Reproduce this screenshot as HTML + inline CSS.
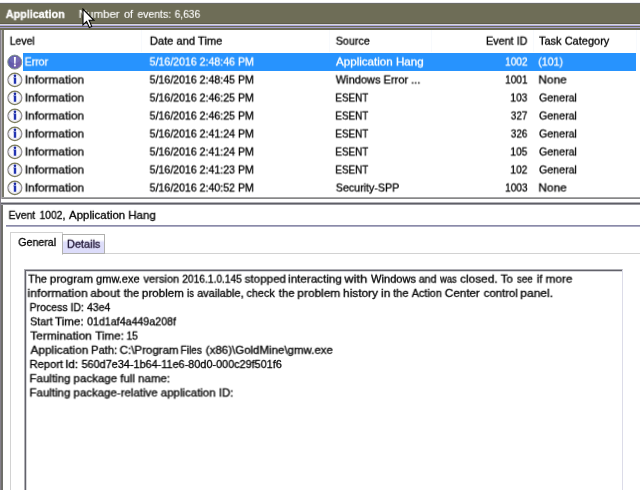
<!DOCTYPE html>
<html>
<head>
<meta charset="utf-8">
<title>Event Viewer</title>
<style>
html,body{margin:0;padding:0;}
html{width:640px;height:490px;overflow:hidden;}
body{width:640px;height:490px;overflow:hidden;background:#fff;position:relative;
 font-family:"Liberation Sans",sans-serif;font-size:11px;color:#000;}
.a{position:absolute;}
.t{position:absolute;left:0;top:0;white-space:pre;line-height:14px;height:14px;transform-origin:0 0;-webkit-text-stroke:0.3px;will-change:transform;}
.w{color:#fff;}
.L{font-size:11.5px;}
.n{-webkit-text-stroke:0.12px;}
#hdr{left:0;top:3px;width:640px;height:21px;background:#6e6d57;border-top:1px solid #6b6b66;box-sizing:border-box;}
#h0{left:0;top:24px;width:640px;height:1px;background:#d6d6da;}
#hm{left:0;top:23px;width:640px;height:1px;background:#5e5d4a;}
#ht{left:0;top:2px;width:640px;height:1px;background:#ebebf1;}
#h1{left:0;top:25px;width:640px;height:1px;background:#b2acde;}
#h2{left:0;top:26px;width:640px;height:1px;background:#6c6b58;}
#h3{left:0;top:27px;width:640px;height:1px;background:#a4a0cc;}
#h4{left:0;top:28px;width:640px;height:2px;background:#6e6d58;}
/* left edge, list section */
#le0{left:0;top:30px;width:1px;height:460px;background:#85808a;}
#le1{left:1px;top:30px;width:1px;height:169px;background:#b2aeb2;}
#le2{left:2px;top:30px;width:2px;height:169px;background:#78786a;}
/* left edge, detail section */
#le3{left:1px;top:203px;width:2px;height:287px;background:#6e6e6a;}
#sel{left:23px;top:53px;width:613px;height:18px;background:#2793fe;}
#lb{left:2px;top:197px;width:638px;height:2px;background:linear-gradient(#b6b6b6,#78787a);}
#sp{left:1px;top:202px;width:639px;height:3px;background:linear-gradient(#dcdce0,#5e5e66 50%,#b8b8be);}
#pl{left:6px;top:225px;width:634px;height:1px;background:#8a8aa8;}
#pl2{left:6px;top:226px;width:634px;height:1px;background:#acacc4;}
#tp{left:10px;top:253px;width:630px;height:237px;border:1px solid #d2d2d2;border-right:none;border-bottom:none;box-sizing:border-box;}
#tg{left:10px;top:232px;width:53px;height:23px;border:1px solid #d2d2d2;border-bottom:none;background:#fff;box-sizing:border-box;}
#td{left:62px;top:234px;width:43px;height:20px;border:1px solid #b0b0ae;background:linear-gradient(#fff 0%,#fff 26%,#dedefa 42%,#dcdcfa 100%);box-sizing:border-box;}
#tb{left:24px;top:269px;width:599px;height:221px;border:1px solid #b0b0b6;border-bottom:none;border-right-color:#dcdce8;box-sizing:border-box;}
#tb2{left:25px;top:270px;width:597px;height:220px;border:1px solid #62626a;border-right:none;border-bottom:none;box-sizing:border-box;}
#tb3{left:26px;top:271px;width:596px;height:219px;border:1px solid #d6d6da;border-right:none;border-bottom:none;box-sizing:border-box;}
.cs{position:absolute;top:30px;width:1px;height:22px;background:#f8fafd;}
.ic{position:absolute;left:7px;width:16px;height:16px;}
</style>
</head>
<body>
<div class="a" id="hdr"></div>
<div class="a" id="ht"></div><div class="a" id="hm"></div><div class="a" id="h0"></div><div class="a" id="h1"></div><div class="a" id="h2"></div><div class="a" id="h3"></div><div class="a" id="h4"></div>
<div class="a" id="le0"></div><div class="a" id="le1"></div><div class="a" id="le2"></div><div class="a" id="le3"></div>
<div class="cs" style="left:141px"></div><div class="cs" style="left:329px"></div><div class="cs" style="left:431px"></div><div class="cs" style="left:533px"></div><div class="cs" style="left:636px"></div>
<span class="t w" id="t_app" style="transform:matrix(0.9831,0.0002,0,1,5.75,6.90);font-weight:bold;">Application</span>
<span class="t w n" id="t_numw0" style="transform:matrix(1.0447,0.0002,0,1,78.76,6.90);">Number</span>
<span class="t w n" id="t_numw1" style="transform:matrix(0.9943,0.0002,0,1,124.00,6.90);">of</span>
<span class="t w n" id="t_numw2" style="transform:matrix(0.9441,0.0002,0,1,137.53,6.90);">events:</span>
<span class="t w n" id="t_numw3" style="transform:matrix(0.9208,0.0002,0,1,174.74,6.90);">6,636</span>

<span class="t" id="c1" style="transform:matrix(0.9469,0.0002,0,1,9.80,33.70);">Level</span>
<span class="t" id="c2" style="transform:matrix(1.0121,0.0002,0,1,149.89,33.70);">Date and Time</span>
<span class="t" id="c3" style="transform:matrix(0.9779,0.0002,0,1,335.76,33.70);">Source</span>
<span class="t" id="c4" style="transform:matrix(0.9816,0.0002,0,1,486.02,33.70);">Event ID</span>
<span class="t" id="c5" style="transform:matrix(1.0000,0.0002,0,1,539.00,33.70);">Task Category</span>

<div class="a" id="sel"></div>
<div class="a" id="lb"></div>
<div class="a" id="sp"></div>
<div class="a" id="pl"></div><div class="a" id="pl2"></div>
<svg width="0" height="0" style="position:absolute"><defs><linearGradient id="ig" x1="0" y1="0" x2="0" y2="1"><stop offset="0" stop-color="#7e7e5c"/><stop offset="0.5" stop-color="#9c98a4"/><stop offset="1" stop-color="#7e7e5c"/></linearGradient></defs></svg>
<svg class="ic" style="top:53.7px" viewBox="0 0 16 16"><defs><linearGradient id="eg" x1="0" y1="0" x2="1" y2="0.3"><stop offset="0" stop-color="#5558ae"/><stop offset="1" stop-color="#7660a8"/></linearGradient></defs>
<ellipse cx="7.75" cy="8.1" rx="7.0" ry="7.0" fill="url(#eg)" stroke="#84968e" stroke-width="1"/>
<ellipse cx="7.8" cy="5.9" rx="5" ry="3.4" fill="#8a88cc" opacity="0.35"/>
<path d="M6.9 3.1h2l-0.35 6.6h-1.3z" fill="#fff"/>
<rect x="6.9" y="10.6" width="2" height="1.9" rx="0.7" fill="#fff"/></svg>
<span class="t w L" id="r0a" style="transform:matrix(0.9143,0.0002,0,1,24.69,54.50);">Error</span>
<span class="t w L" id="r0b" style="transform:matrix(0.9208,0.0002,0,1,149.64,54.50);">5/16/2016 2:48:46 PM</span>
<span class="t w L" id="r0c" style="transform:matrix(1.0087,0.0002,0,1,336.00,54.50);">Application Hang</span>
<span class="t w L" id="r0d" style="transform:matrix(0.8750,0.0002,0,1,505.12,54.50);">1002</span>
<span class="t w L" id="r0e" style="transform:matrix(0.9216,0.0002,0,1,538.31,54.50);">(101)</span>
<svg class="ic" style="top:71.7px" viewBox="0 0 16 16">
<ellipse cx="7.85" cy="7.85" rx="6.95" ry="6.6" fill="#fcfcfe" stroke="url(#ig)" stroke-width="1.4"/>
<ellipse cx="7.85" cy="7.85" rx="5.6" ry="5.3" fill="none" stroke="#e6e4ee" stroke-width="1"/>
<circle cx="7.95" cy="3.85" r="1.3" fill="#1c2ca4"/>
<path d="M6.3 5.4h2.9v6.4H6.8V6.3H6.3z" fill="#2234b2"/></svg>
<span class="t L" id="r1a" style="transform:matrix(1.0314,0.0002,0,1,24.72,72.50);">Information</span>
<span class="t L" id="r1b" style="transform:matrix(0.9208,0.0002,0,1,149.64,72.50);">5/16/2016 2:48:45 PM</span>
<span class="t L" id="r1c" style="transform:matrix(0.9598,0.0002,0,1,335.76,72.50);">Windows Error ...</span>
<span class="t L" id="r1d" style="transform:matrix(0.8750,0.0002,0,1,505.12,72.50);">1001</span>
<span class="t L" id="r1e" style="transform:matrix(1.0288,0.0002,0,1,538.47,72.50);">None</span>
<svg class="ic" style="top:89.7px" viewBox="0 0 16 16">
<ellipse cx="7.85" cy="7.85" rx="6.95" ry="6.6" fill="#fcfcfe" stroke="url(#ig)" stroke-width="1.4"/>
<ellipse cx="7.85" cy="7.85" rx="5.6" ry="5.3" fill="none" stroke="#e6e4ee" stroke-width="1"/>
<circle cx="7.95" cy="3.85" r="1.3" fill="#1c2ca4"/>
<path d="M6.3 5.4h2.9v6.4H6.8V6.3H6.3z" fill="#2234b2"/></svg>
<span class="t L" id="r2a" style="transform:matrix(1.0314,0.0002,0,1,24.72,90.50);">Information</span>
<span class="t L" id="r2b" style="transform:matrix(0.9208,0.0002,0,1,149.64,90.50);">5/16/2016 2:46:25 PM</span>
<span class="t L" id="r2c" style="transform:matrix(0.8600,0.0002,0,1,335.39,90.50);">ESENT</span>
<span class="t L" id="r2d" style="transform:matrix(0.8873,0.0002,0,1,510.36,90.50);">103</span>
<span class="t L" id="r2e" style="transform:matrix(0.9245,0.0002,0,1,539.04,90.50);">General</span>
<svg class="ic" style="top:107.7px" viewBox="0 0 16 16">
<ellipse cx="7.85" cy="7.85" rx="6.95" ry="6.6" fill="#fcfcfe" stroke="url(#ig)" stroke-width="1.4"/>
<ellipse cx="7.85" cy="7.85" rx="5.6" ry="5.3" fill="none" stroke="#e6e4ee" stroke-width="1"/>
<circle cx="7.95" cy="3.85" r="1.3" fill="#1c2ca4"/>
<path d="M6.3 5.4h2.9v6.4H6.8V6.3H6.3z" fill="#2234b2"/></svg>
<span class="t L" id="r3a" style="transform:matrix(1.0314,0.0002,0,1,24.72,108.50);">Information</span>
<span class="t L" id="r3b" style="transform:matrix(0.9208,0.0002,0,1,149.64,108.50);">5/16/2016 2:46:25 PM</span>
<span class="t L" id="r3c" style="transform:matrix(0.8600,0.0002,0,1,335.39,108.50);">ESENT</span>
<span class="t L" id="r3d" style="transform:matrix(0.8630,0.0002,0,1,510.82,108.50);">327</span>
<span class="t L" id="r3e" style="transform:matrix(0.9245,0.0002,0,1,539.04,108.50);">General</span>
<svg class="ic" style="top:125.7px" viewBox="0 0 16 16">
<ellipse cx="7.85" cy="7.85" rx="6.95" ry="6.6" fill="#fcfcfe" stroke="url(#ig)" stroke-width="1.4"/>
<ellipse cx="7.85" cy="7.85" rx="5.6" ry="5.3" fill="none" stroke="#e6e4ee" stroke-width="1"/>
<circle cx="7.95" cy="3.85" r="1.3" fill="#1c2ca4"/>
<path d="M6.3 5.4h2.9v6.4H6.8V6.3H6.3z" fill="#2234b2"/></svg>
<span class="t L" id="r4a" style="transform:matrix(1.0314,0.0002,0,1,24.72,126.50);">Information</span>
<span class="t L" id="r4b" style="transform:matrix(0.9208,0.0002,0,1,149.64,126.50);">5/16/2016 2:41:24 PM</span>
<span class="t L" id="r4c" style="transform:matrix(0.8600,0.0002,0,1,335.39,126.50);">ESENT</span>
<span class="t L" id="r4d" style="transform:matrix(0.8630,0.0002,0,1,510.82,126.50);">326</span>
<span class="t L" id="r4e" style="transform:matrix(0.9245,0.0002,0,1,539.04,126.50);">General</span>
<svg class="ic" style="top:143.7px" viewBox="0 0 16 16">
<ellipse cx="7.85" cy="7.85" rx="6.95" ry="6.6" fill="#fcfcfe" stroke="url(#ig)" stroke-width="1.4"/>
<ellipse cx="7.85" cy="7.85" rx="5.6" ry="5.3" fill="none" stroke="#e6e4ee" stroke-width="1"/>
<circle cx="7.95" cy="3.85" r="1.3" fill="#1c2ca4"/>
<path d="M6.3 5.4h2.9v6.4H6.8V6.3H6.3z" fill="#2234b2"/></svg>
<span class="t L" id="r5a" style="transform:matrix(1.0314,0.0002,0,1,24.72,144.50);">Information</span>
<span class="t L" id="r5b" style="transform:matrix(0.9208,0.0002,0,1,149.64,144.50);">5/16/2016 2:41:24 PM</span>
<span class="t L" id="r5c" style="transform:matrix(0.8600,0.0002,0,1,335.39,144.50);">ESENT</span>
<span class="t L" id="r5d" style="transform:matrix(0.8873,0.0002,0,1,510.36,144.50);">105</span>
<span class="t L" id="r5e" style="transform:matrix(0.9245,0.0002,0,1,539.04,144.50);">General</span>
<svg class="ic" style="top:161.7px" viewBox="0 0 16 16">
<ellipse cx="7.85" cy="7.85" rx="6.95" ry="6.6" fill="#fcfcfe" stroke="url(#ig)" stroke-width="1.4"/>
<ellipse cx="7.85" cy="7.85" rx="5.6" ry="5.3" fill="none" stroke="#e6e4ee" stroke-width="1"/>
<circle cx="7.95" cy="3.85" r="1.3" fill="#1c2ca4"/>
<path d="M6.3 5.4h2.9v6.4H6.8V6.3H6.3z" fill="#2234b2"/></svg>
<span class="t L" id="r6a" style="transform:matrix(1.0314,0.0002,0,1,24.72,162.50);">Information</span>
<span class="t L" id="r6b" style="transform:matrix(0.9208,0.0002,0,1,149.64,162.50);">5/16/2016 2:41:23 PM</span>
<span class="t L" id="r6c" style="transform:matrix(0.8600,0.0002,0,1,335.39,162.50);">ESENT</span>
<span class="t L" id="r6d" style="transform:matrix(0.8873,0.0002,0,1,510.36,162.50);">102</span>
<span class="t L" id="r6e" style="transform:matrix(0.9245,0.0002,0,1,539.04,162.50);">General</span>
<svg class="ic" style="top:179.7px" viewBox="0 0 16 16">
<ellipse cx="7.85" cy="7.85" rx="6.95" ry="6.6" fill="#fcfcfe" stroke="url(#ig)" stroke-width="1.4"/>
<ellipse cx="7.85" cy="7.85" rx="5.6" ry="5.3" fill="none" stroke="#e6e4ee" stroke-width="1"/>
<circle cx="7.95" cy="3.85" r="1.3" fill="#1c2ca4"/>
<path d="M6.3 5.4h2.9v6.4H6.8V6.3H6.3z" fill="#2234b2"/></svg>
<span class="t L" id="r7a" style="transform:matrix(1.0314,0.0002,0,1,24.72,180.50);">Information</span>
<span class="t L" id="r7b" style="transform:matrix(0.9208,0.0002,0,1,149.64,180.50);">5/16/2016 2:40:52 PM</span>
<span class="t L" id="r7c" style="transform:matrix(0.9294,0.0002,0,1,335.79,180.50);">Security-SPP</span>
<span class="t L" id="r7d" style="transform:matrix(0.8750,0.0002,0,1,505.12,180.50);">1003</span>
<span class="t L" id="r7e" style="transform:matrix(1.0288,0.0002,0,1,538.47,180.50);">None</span>

<span class="t" id="t_evw0" style="transform:matrix(0.9500,0.0002,0,1,8.60,207.90);">Event</span>
<span class="t" id="t_evw1" style="transform:matrix(0.9359,0.0002,0,1,39.60,207.90);">1002,</span>
<span class="t" id="t_evw2" style="transform:matrix(1.0434,0.0002,0,1,69.00,207.90);">Application</span>
<span class="t" id="t_evw3" style="transform:matrix(1.0449,0.0002,0,1,128.36,207.90);">Hang</span>

<div class="a" id="tp"></div>
<div class="a" id="tg"></div>
<div class="a" id="td"></div>
<span class="t" id="t_gen" style="transform:matrix(0.9671,0.0002,0,1,18.27,235.00);">General</span>
<span class="t" id="t_det" style="transform:matrix(0.9922,0.0002,0,1,67.01,236.80);color:#1a1030;">Details</span>

<div class="a" id="tb"></div><div class="a" id="tb2"></div><div class="a" id="tb3"></div>
<span class="t" id="d0w0" style="transform:matrix(0.9890,0.0002,0,1,28.25,271.70);">The</span>
<span class="t" id="d0w1" style="transform:matrix(1.0519,0.0002,0,1,49.96,271.70);">program</span>
<span class="t" id="d0w2" style="transform:matrix(1.0071,0.0002,0,1,96.00,271.70);">gmw.exe</span>
<span class="t" id="d0w3" style="transform:matrix(1.0086,0.0002,0,1,143.50,271.70);">version</span>
<span class="t" id="d0w4" style="transform:matrix(0.9289,0.0002,0,1,182.29,271.70);">2016.1.0.145</span>
<span class="t" id="d0w5" style="transform:matrix(1.0526,0.0002,0,1,244.72,271.70);">stopped</span>
<span class="t" id="d0w6" style="transform:matrix(1.0558,0.0002,0,1,288.21,271.70);">interacting</span>
<span class="t" id="d0w7" style="transform:matrix(1.1600,0.0002,0,1,344.50,271.70);">with</span>
<span class="t" id="d0w8" style="transform:matrix(1.0113,0.0002,0,1,371.00,271.70);">Windows</span>
<span class="t" id="d0w9" style="transform:matrix(0.9710,0.0002,0,1,418.76,271.70);">and</span>
<span class="t" id="d0w10" style="transform:matrix(0.8600,0.0002,0,1,440.00,271.70);">was</span>
<span class="t" id="d0w11" style="transform:matrix(1.0746,0.0002,0,1,460.21,271.70);">closed.</span>
<span class="t" id="d0w12" style="transform:matrix(1.0545,0.0002,0,1,500.74,271.70);">To</span>
<span class="t" id="d0w13" style="transform:matrix(0.8955,0.0002,0,1,516.95,271.70);">see</span>
<span class="t" id="d0w14" style="transform:matrix(0.9684,0.0002,0,1,536.87,271.70);">if</span>
<span class="t" id="d0w15" style="transform:matrix(1.0653,0.0002,0,1,545.70,271.70);">more</span>
<span class="t" id="d1w0" style="transform:matrix(1.1038,0.0002,0,1,27.67,285.92);">information</span>
<span class="t" id="d1w1" style="transform:matrix(1.0667,0.0002,0,1,90.47,285.92);">about</span>
<span class="t" id="d1w2" style="transform:matrix(1.0034,0.0002,0,1,123.75,285.92);">the</span>
<span class="t" id="d1w3" style="transform:matrix(1.0523,0.0002,0,1,141.96,285.92);">problem</span>
<span class="t" id="d1w4" style="transform:matrix(0.8600,0.0002,0,1,187.10,285.92);">is</span>
<span class="t" id="d1w5" style="transform:matrix(1.0000,0.0002,0,1,197.25,285.92);">available,</span>
<span class="t" id="d1w6" style="transform:matrix(0.9841,0.0002,0,1,246.51,285.92);">check</span>
<span class="t" id="d1w7" style="transform:matrix(1.0379,0.0002,0,1,278.74,285.92);">the</span>
<span class="t" id="d1w8" style="transform:matrix(1.0784,0.0002,0,1,297.44,285.92);">problem</span>
<span class="t" id="d1w9" style="transform:matrix(1.0714,0.0002,0,1,343.20,285.92);">history</span>
<span class="t" id="d1w10" style="transform:matrix(1.0714,0.0002,0,1,381.20,285.92);">in</span>
<span class="t" id="d1w11" style="transform:matrix(1.0000,0.0002,0,1,393.25,285.92);">the</span>
<span class="t" id="d1w12" style="transform:matrix(0.9866,0.0002,0,1,411.75,285.92);">Action</span>
<span class="t" id="d1w13" style="transform:matrix(1.0569,0.0002,0,1,444.87,285.92);">Center</span>
<span class="t" id="d1w14" style="transform:matrix(1.0315,0.0002,0,1,483.73,285.92);">control</span>
<span class="t" id="d1w15" style="transform:matrix(1.0885,0.0002,0,1,520.43,285.92);">panel.</span>
<span class="t" id="d2" style="transform:matrix(0.9566,0.0002,0,1,29.64,300.14);">Process ID: 43e4</span>
<span class="t" id="d3w0" style="transform:matrix(0.9670,0.0002,0,1,30.12,314.36);">Start</span>
<span class="t" id="d3w1" style="transform:matrix(1.0577,0.0002,0,1,54.99,314.36);">Time:</span>
<span class="t" id="d3w2" style="transform:matrix(0.9688,0.0002,0,1,87.12,314.36);">01d1af4a449a208f</span>
<span class="t" id="d4w0" style="transform:matrix(1.0839,0.0002,0,1,30.33,328.58);">Termination</span>
<span class="t" id="d4w1" style="transform:matrix(1.0538,0.0002,0,1,95.34,328.58);">Time:</span>
<span class="t" id="d4w2" style="transform:matrix(0.9364,0.0002,0,1,126.50,328.58);">15</span>
<span class="t" id="d5w0" style="transform:matrix(1.0717,0.0002,0,1,30.60,342.80);">Application</span>
<span class="t" id="d5w1" style="transform:matrix(1.0105,0.0002,0,1,91.19,342.80);">Path:</span>
<span class="t" id="d5w2" style="transform:matrix(1.0464,0.0002,0,1,119.68,342.80);">C:\Program</span>
<span class="t" id="d5w3" style="transform:matrix(0.9195,0.0002,0,1,180.58,342.80);">Files</span>
<span class="t" id="d5w4" style="transform:matrix(1.0456,0.0002,0,1,205.72,342.80);">(x86)\GoldMine\gmw.exe</span>
<span class="t" id="d6w0" style="transform:matrix(1.0125,0.0002,0,1,29.59,357.02);">Report</span>
<span class="t" id="d6w1" style="transform:matrix(1.0537,0.0002,0,1,65.25,357.02);">Id:</span>
<span class="t" id="d6w2" style="transform:matrix(0.9871,0.0002,0,1,81.61,357.02);">560d7e34-1b64-11e6-80d0-000c29f501f6</span>
<span class="t" id="d7" style="transform:matrix(1.0445,0.0002,0,1,29.56,371.24);">Faulting package full name:</span>
<span class="t" id="d8" style="transform:matrix(1.0421,0.0002,0,1,29.56,385.46);">Faulting package-relative application ID:</span>

<svg class="a" style="left:82.2px;top:8.2px;width:14px;height:22px" viewBox="0 0 14 22">
<path d="M1 1 L1 16.9 L4.6 13.4 L7.3 19.5 L9.7 18.4 L7.1 12.3 L11.9 12.3 Z" fill="#fff" stroke="#000" stroke-width="1.1" stroke-linejoin="miter"/></svg>

</body>
</html>
